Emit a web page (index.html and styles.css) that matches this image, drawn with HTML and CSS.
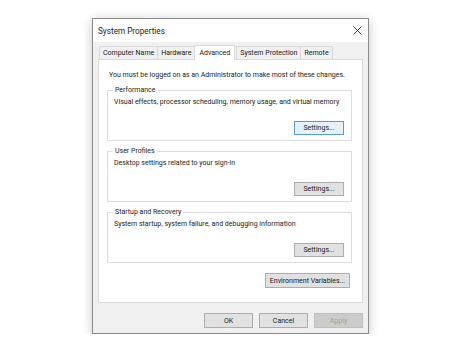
FILE: index.html
```html
<!DOCTYPE html>
<html lang="en">
<head>
    <meta charset="UTF-8">
    <meta name="viewport" content="width=device-width, initial-scale=1.0">
    <title>System Properties</title>
    <link rel="stylesheet" href="styles.css">
</head>
<body>
    <div class="dialog">
        <div class="titlebar">
            <span class="title">System Properties</span>
            <span class="close">
                <svg width="9" height="9" viewBox="0 0 9 9"><path d="M0.5 0.5 L8.5 8.5 M8.5 0.5 L0.5 8.5" stroke="#222" stroke-width="0.9" fill="none"/></svg>
            </span>
        </div>
        <div class="body">
            <div class="tabs">
                <div class="tab">Computer Name</div>
                <div class="tab">Hardware</div>
                <div class="tab active">Advanced</div>
                <div class="tab">System Protection</div>
                <div class="tab">Remote</div>
            </div>
            <div class="panel">
                <p class="note">You must be logged on as an Administrator to make most of these changes.</p>

                <fieldset class="group">
                    <legend>Performance</legend>
                    <p>Visual effects, processor scheduling, memory usage, and virtual memory</p>
                    <div class="actions"><button class="btn focus">Settings...</button></div>
                </fieldset>

                <fieldset class="group">
                    <legend>User Profiles</legend>
                    <p>Desktop settings related to your sign-in</p>
                    <div class="actions"><button class="btn">Settings...</button></div>
                </fieldset>

                <fieldset class="group">
                    <legend>Startup and Recovery</legend>
                    <p>System startup, system failure, and debugging information</p>
                    <div class="actions"><button class="btn">Settings...</button></div>
                </fieldset>

                <div class="env"><button class="btn wide">Environment Variables...</button></div>
            </div>
            <div class="footer">
                <button class="btn foot">OK</button>
                <button class="btn foot">Cancel</button>
                <button class="btn foot disabled">Apply</button>
            </div>
        </div>
    </div>
</body>
</html>
```

FILE: styles.css
```css
body {
    margin: 0;
    background-color: #ffffff;
    font-family: Roboto, "Liberation Sans", sans-serif;
    font-size: 7px;
    color: #1a1a1a;
}
.dialog {
    width: 275px;
    margin: 18px 0 0 92px;
    border: 1px solid #8a8a8a;
    background-color: #f0f0f0;
    box-shadow: 0 2px 10px rgba(0, 0, 0, 0.22);
}
.titlebar {
    height: 23px;
    display: flex;
    align-items: center;
    justify-content: space-between;
    padding: 0 6px 0 5px;
    background-color: #ffffff;
}
.title {
    font-size: 8.2px;
    color: #222;
}
.close {
    display: flex;
}
.body {
    padding: 2px 5px 5px 5px;
}
.tabs {
    display: flex;
    align-items: flex-end;
    height: 15px;
    padding-left: 1px;
    white-space: nowrap;
}
.tab {
    height: 12px;
    line-height: 12px;
    padding: 0 3px;
    border: 1px solid #d9d9d9;
    border-bottom: none;
    margin-right: -1px;
    background-color: #f0f0f0;
}
.tab.active {
    height: 14px;
    line-height: 14px;
    padding: 0 4px;
    margin: 0 1px 0 0;
    background-color: #ffffff;
    position: relative;
    top: 1px;
    z-index: 1;
}
.panel {
    background-color: #ffffff;
    border: 1px solid #d9d9d9;
    height: 242px;
    padding: 0 10px 0 8px;
    white-space: nowrap;
}
.note {
    margin: 9px 0 0 2px;
    line-height: 12px;
}
.group {
    margin: 4px 0 0 0;
    padding: 0 7px 5px 6px;
    border: 1px solid #dcdcdc;
}
.group legend {
    padding: 0 2px;
    margin-left: -1px;
    line-height: 11px;
}
.group p {
    margin: 0;
    line-height: 13px;
}
.group + .group {
    margin-top: 5px;
}
.actions {
    display: flex;
    justify-content: flex-end;
    margin-top: 12px;
}
.btn {
    font-family: inherit;
    font-size: 7px;
    color: #1a1a1a;
    height: 14px;
    width: 50px;
    padding: 0;
    background-color: #e1e1e1;
    border: 1px solid #adadad;
    border-radius: 0;
}
.btn.focus {
    background-color: #e5f1fb;
    border-color: #5a9ad8;
}
.env {
    display: flex;
    justify-content: flex-end;
    margin: 10px 2px 0 0;
}
.btn.wide {
    width: 85px;
    height: 15px;
}
.footer {
    display: flex;
    justify-content: flex-end;
    gap: 6px;
    padding-top: 10px;
}
.btn.foot {
    width: 49px;
    height: 15px;
}
.btn.disabled {
    color: #a0a0a0;
    background-color: #cccccc;
    border-color: #bfbfbf;
}
```
